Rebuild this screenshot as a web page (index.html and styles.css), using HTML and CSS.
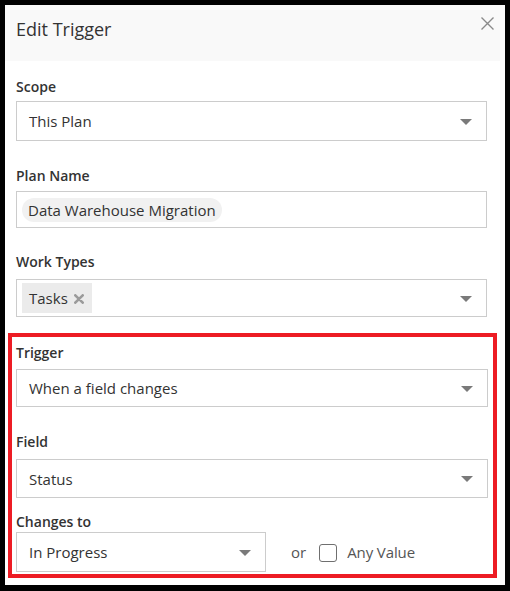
FILE: index.html
```html
<!DOCTYPE html>
<html>
<head>
<meta charset="utf-8">
<link rel="stylesheet" href="styles.css">
</head>
<body>
<div class="dialog">
  <div class="header">
    <h1 class="title">Edit Trigger</h1>
    <button class="close" aria-label="Close">
      <svg width="13" height="13" viewBox="0 0 13 13"><path d="M0.5 0.5 L12.5 12.5 M12.5 0.5 L0.5 12.5" stroke="#8a8a8a" stroke-width="1.4" fill="none"/></svg>
    </button>
  </div>
  <div class="body">
    <div class="content">
      <div class="group g-scope">
        <label class="label">Scope</label>
        <div class="select h40"><span class="value">This Plan</span><span class="caret"></span></div>
      </div>
      <div class="group g-plan">
        <label class="label">Plan Name</label>
        <div class="input h37"><span class="pill">Data Warehouse Migration</span></div>
      </div>
      <div class="group g-work">
        <label class="label">Work Types</label>
        <div class="select multi h38"><span class="tag">Tasks <svg class="tag-x" width="10" height="10" viewBox="0 0 10 10"><path d="M1.3 1.3 L8.7 8.7 M8.7 1.3 L1.3 8.7" stroke="#9a9a9a" stroke-width="2.6" stroke-linecap="round" fill="none"/></svg></span><span class="caret"></span></div>
      </div>
      <div class="highlight">
        <div class="group g-trigger">
          <label class="label">Trigger</label>
          <div class="select h38"><span class="value">When a field changes</span><span class="caret"></span></div>
        </div>
        <div class="group g-field">
          <label class="label">Field</label>
          <div class="select h39"><span class="value">Status</span><span class="caret"></span></div>
        </div>
        <div class="group g-changes">
          <label class="label">Changes to</label>
          <div class="row">
            <div class="select small h40"><span class="value">In Progress</span><span class="caret"></span></div>
            <span class="or">or</span>
            <span class="checkbox"></span>
            <span class="any">Any Value</span>
          </div>
        </div>
      </div>
    </div>
  </div>
</div>
</body>
</html>
```
FILE: styles.css
```css
* { box-sizing: border-box; }
html, body { margin: 0; padding: 0; }
body {
  background: #000;
  font-family: "Open Sans", "Noto Sans", sans-serif;
  color: #333;
  width: 510px;
  height: 591px;
  overflow: hidden;
}
.dialog {
  margin: 5px;
  width: 500px;
  height: 580px;
  background: #f9f9f9;
  display: flex;
  flex-direction: column;
}
.header {
  height: 56px;
  display: flex;
  align-items: flex-start;
  justify-content: space-between;
  padding: 0 11px 0 11px;
}
.title {
  margin: 0;
  font-size: 18px;
  font-weight: 400;
  line-height: 24px;
  padding-top: 12px;
  color: #333;
}
.close {
  border: 0;
  background: none;
  padding: 0;
  margin-top: 12px;
  width: 13px;
  height: 13px;
  display: block;
}
.close svg { display: block; }
.body {
  flex: 1;
  padding-right: 5px;
}
.content {
  background: #fff;
  height: 100%;
  padding: 16px 13px 0 11px;
}
.group { display: flex; flex-direction: column; }
.label {
  font-size: 14px;
  font-weight: 600;
  line-height: 20px;
  color: #333;
}
.select, .input {
  border: 1px solid #cccccc;
  background: #fff;
  display: flex;
  align-items: center;
  position: relative;
  font-size: 15px;
  color: #333;
}
.select { padding: 0 14px 0 12px; justify-content: space-between; }
.input { padding: 0 5px; }
.h37 { height: 37px; }
.h38 { height: 38px; }
.h39 { height: 39px; }
.h40 { height: 40px; }
.value { line-height: 20px; }
.caret {
  width: 0; height: 0;
  border-left: 6px solid transparent;
  border-right: 6px solid transparent;
  border-top: 6px solid #7a7a7a;
  margin-top: 1px;
}
.pill {
  background: #f1f1f1;
  border-radius: 12px;
  height: 24px;
  line-height: 24px;
  padding: 0 6px;
  font-size: 15px;
}
.multi { padding-left: 5px; }
.tag {
  background: #ebebeb;
  height: 30px;
  display: flex;
  align-items: center;
  padding: 0 8px 0 7px;
  font-size: 15px;
  gap: 6px;
}
.tag-x { display: block; margin-top: 1px; }

.g-scope .label { margin-bottom: 4px; }
.g-plan { margin-top: 25px; }
.g-plan .label { margin-bottom: 5px; }
.g-work { margin-top: 24px; }
.g-work .label { margin-bottom: 7px; }

.highlight {
  margin: 16px -10px 0 -8px;
  border: 4px solid #ed1c24;
  padding: 6px 5px 2px 4px;
}
.g-trigger .label { margin-bottom: 6px; }
.g-field { margin-top: 25px; }
.g-field .label { margin-bottom: 7px; }
.g-changes { margin-top: 14px; }
.row { display: flex; align-items: center; }
.small { width: 250px; }
.or { margin-left: 25px; font-size: 15px; color: #555; }
.checkbox {
  width: 18px; height: 18px;
  border: 1.5px solid #6f6f6f;
  border-radius: 3px;
  margin-left: 13px;
  margin-top: 2px;
}
.any { margin-left: 10px; font-size: 15px; color: #555; letter-spacing: -0.1px; }
```
